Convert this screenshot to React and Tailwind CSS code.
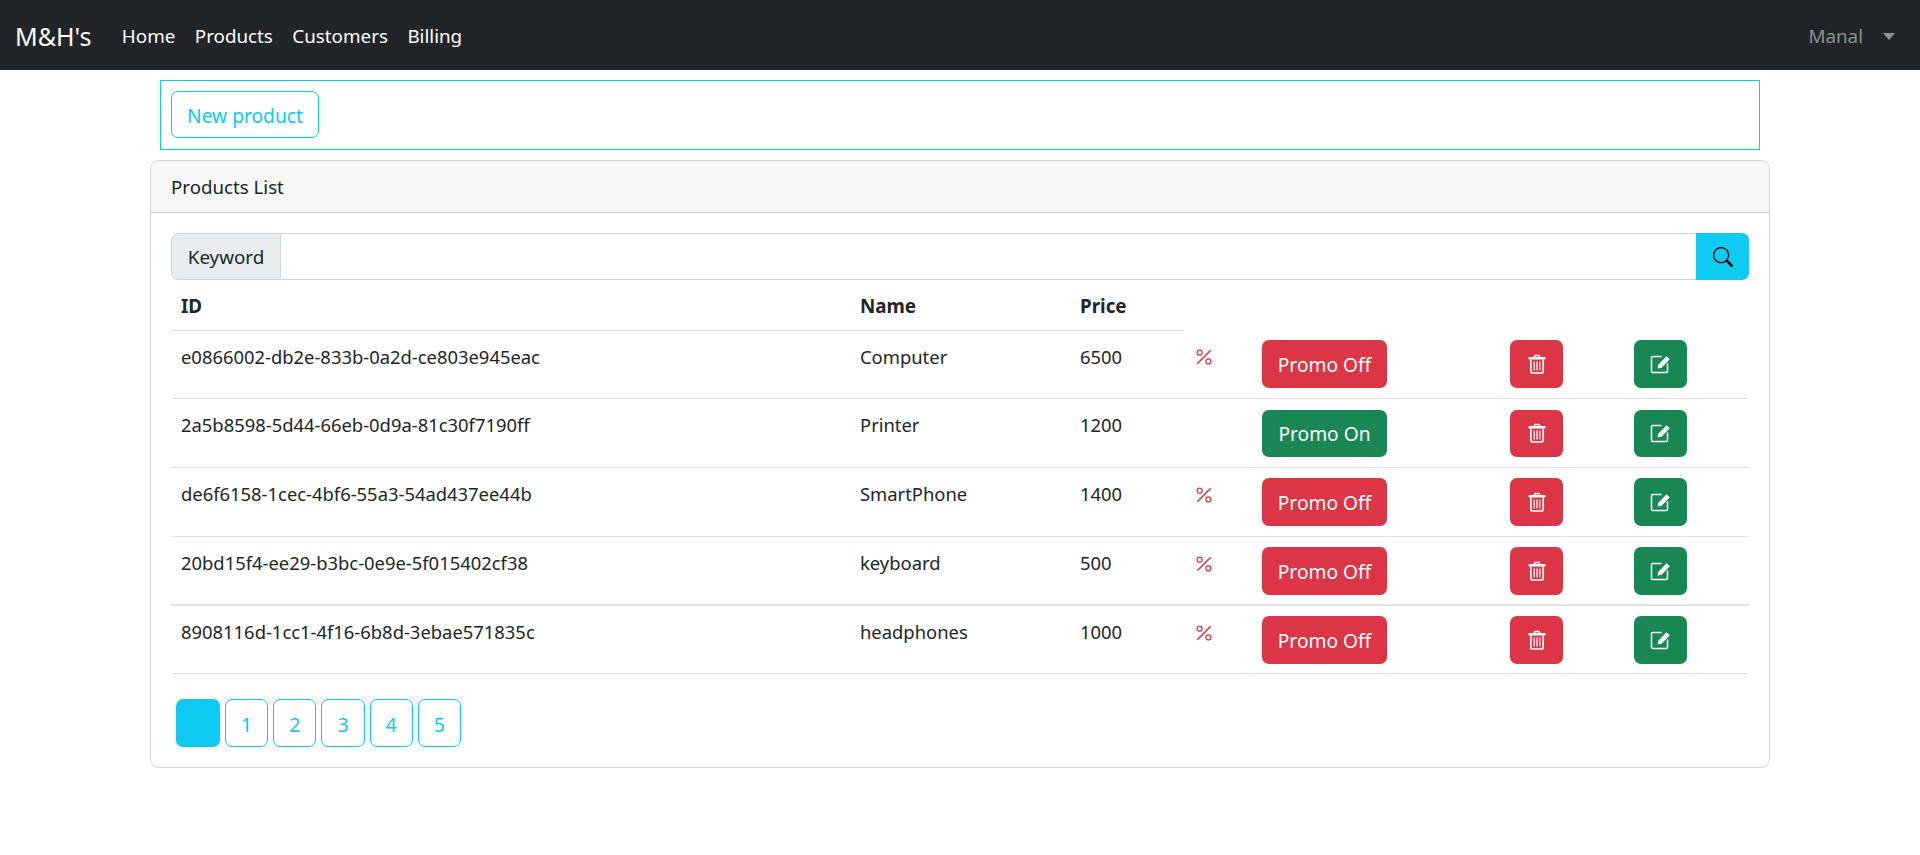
import { BsSearch, BsPercent } from 'react-icons/bs';

const products = [
  { id: 'e0866002-db2e-833b-0a2d-ce803e945eac', name: 'Computer', price: 6500, promo: false },
  { id: '2a5b8598-5d44-66eb-0d9a-81c30f7190ff', name: 'Printer', price: 1200, promo: true },
  { id: 'de6f6158-1cec-4bf6-55a3-54ad437ee44b', name: 'SmartPhone', price: 1400, promo: false },
  { id: '20bd15f4-ee29-b3bc-0e9e-5f015402cf38', name: 'keyboard', price: 500, promo: false },
  { id: '8908116d-1cc1-4f16-6b8d-3ebae571835c', name: 'headphones', price: 1000, promo: false },
];

const TrashIcon = () => (
  <svg width="20" height="20" viewBox="0 0 20 20" fill="none">
    <path d="M7 3.5 8 1.5h4l1 2" stroke="currentColor" strokeWidth="1.6" />
    <rect x="1.5" y="3" width="17" height="2.6" rx="0.8" fill="currentColor" />
    <path d="M3.8 5.5V17a2 2 0 0 0 2 2h8.4a2 2 0 0 0 2-2V5.5" stroke="currentColor" strokeWidth="1.7" />
    <path d="M7.2 7.5v9M10 7.5v9M12.8 7.5v9" stroke="currentColor" strokeWidth="1.2" />
  </svg>
);

const EditIcon = () => (
  <svg width="21" height="20" viewBox="0 0 21 20" fill="none">
    <path d="M11.5 2.5H2.8a1.3 1.3 0 0 0-1.3 1.3v13.4A1.3 1.3 0 0 0 2.8 18.500h13.400a1.300 1.300 0 0 0 1.300-1.300V9.500" stroke="currentColor" strokeWidth="1.5" />
    <path d="M7.500 14.500 8.300 10.800 16.500 2.200l3.300 3.100-8.200 8.500z" fill="currentColor" />
  </svg>
);

const App = () => {
  return (
    <div className="min-h-[855px] bg-white text-[18.8px] leading-[30px] text-[#212529] font-['Noto_Sans',sans-serif]">
      <nav className="h-[70px] bg-[#212529] flex items-center pl-[15px] pr-[25px] pt-[2px]">
        <a className="text-[25px] text-white mr-[30.500px]">M&amp;H's</a>
        <div className="flex gap-[19.500px] text-white">
          <a>Home</a>
          <a>Products</a>
          <a>Customers</a>
          <a>Billing</a>
        </div>
        <div className="ml-auto flex items-center text-[#8f9193]">
          <span>Manal</span>
          <span className="ml-[20px] w-0 h-0 border-x-[6px] border-x-transparent border-t-[7px] border-t-[#8f9193]"></span>
        </div>
      </nav>

      <div className="w-[1620px] mx-auto">
        <div className="mt-[10px] mx-[10px] h-[70px] border border-[#0dcaf0] p-[10px]">
          <button className="w-[148px] h-[47px] pt-[2px] border border-[#0dcaf0] rounded-[7px] text-[19.200px] text-[#0dcaf0]">New product</button>
        </div>

        <div className="mt-[10px] h-[608px] border border-[#d1d2d3] rounded-[9px] overflow-hidden">
          <div className="h-[52px] bg-[#f7f7f7] border-b border-[#d1d2d3] px-[20px] flex items-center text-[18.700px]">Products List</div>
          <div className="px-[20px] pt-[20px]">
            <div className="flex h-[47px]">
              <div className="w-[110px] bg-[#e9ecef] border border-[#ced4da] rounded-l-[7px] flex items-center justify-center">Keyword</div>
              <div className="flex-1 border-y border-[#ced4da]"></div>
              <button className="w-[53px] bg-[#0dcaf0] rounded-r-[7px] flex items-center justify-center text-black">
                <BsSearch className="text-[20px]" />
              </button>
            </div>

            <table className="w-full table-fixed border-collapse text-[18.400px]">
              <colgroup>
                <col className="w-[679px]" />
                <col className="w-[220px]" />
                <col className="w-[114px]" />
                <col className="w-[68px]" />
                <col className="w-[248px]" />
                <col className="w-[124px]" />
                <col />
              </colgroup>
              <thead>
                <tr className="h-[50px] text-[18.800px]">
                  <th className="text-left font-bold px-[10px] pt-[2px] border-b border-[#dee2e6]">ID</th>
                  <th className="text-left font-bold px-[10px] pt-[2px] border-b border-[#dee2e6]">Name</th>
                  <th className="text-left font-bold px-[10px] pt-[2px] border-b border-[#dee2e6]">Price</th>
                  <th colSpan={4}></th>
                </tr>
              </thead>
              <tbody>
                {products.map((p) => (
                  <tr key={p.id} className="h-[68.750px] border-b border-[#dee2e6] [&:nth-child(4)]:border-b-2">
                    <td className="px-[10px] pt-[11px] align-top">{p.id}</td>
                    <td className="px-[10px] pt-[11px] align-top">{p.name}</td>
                    <td className="px-[10px] pt-[11px] align-top">{p.price}</td>
                    <td className="px-[10px] pt-[11px] align-top">
                      {!p.promo && <BsPercent className="text-[#dc3545] text-[20px] mt-[6px]" />}
                    </td>
                    <td className="px-[10px] pt-[10.400px] align-top">
                      <button className={`w-[125px] h-[47.500px] pt-[2px] rounded-[7px] text-[19.200px] text-white ${p.promo ? 'bg-[#198754]' : 'bg-[#dc3545]'}`}>
                        {p.promo ? 'Promo On' : 'Promo Off'}
                      </button>
                    </td>
                    <td className="px-[10px] pt-[10.400px] align-top">
                      <button className="w-[53px] h-[47.500px] rounded-[7px] bg-[#dc3545] text-white flex items-center justify-center">
                        <TrashIcon />
                      </button>
                    </td>
                    <td className="px-[10px] pt-[10.400px] align-top">
                      <button className="w-[53px] h-[47.500px] rounded-[7px] bg-[#198754] text-white flex items-center justify-center">
                        <EditIcon />
                      </button>
                    </td>
                  </tr>
                ))}
              </tbody>
            </table>

            <div className="flex gap-[5px] mt-[25px] ml-[5px]">
              <button className="w-[44px] h-[48px] bg-[#0dcaf0] rounded-[7px]"></button>
              {[1, 2, 3, 4, 5].map((n) => (
                <button key={n} className="w-[43.200px] h-[48px] pt-[3px] border border-[#0dcaf0] rounded-[7px] text-[19.500px] text-[#0dcaf0]">{n}</button>
              ))}
            </div>
          </div>
        </div>
      </div>
    </div>
  );
};

export default App;
